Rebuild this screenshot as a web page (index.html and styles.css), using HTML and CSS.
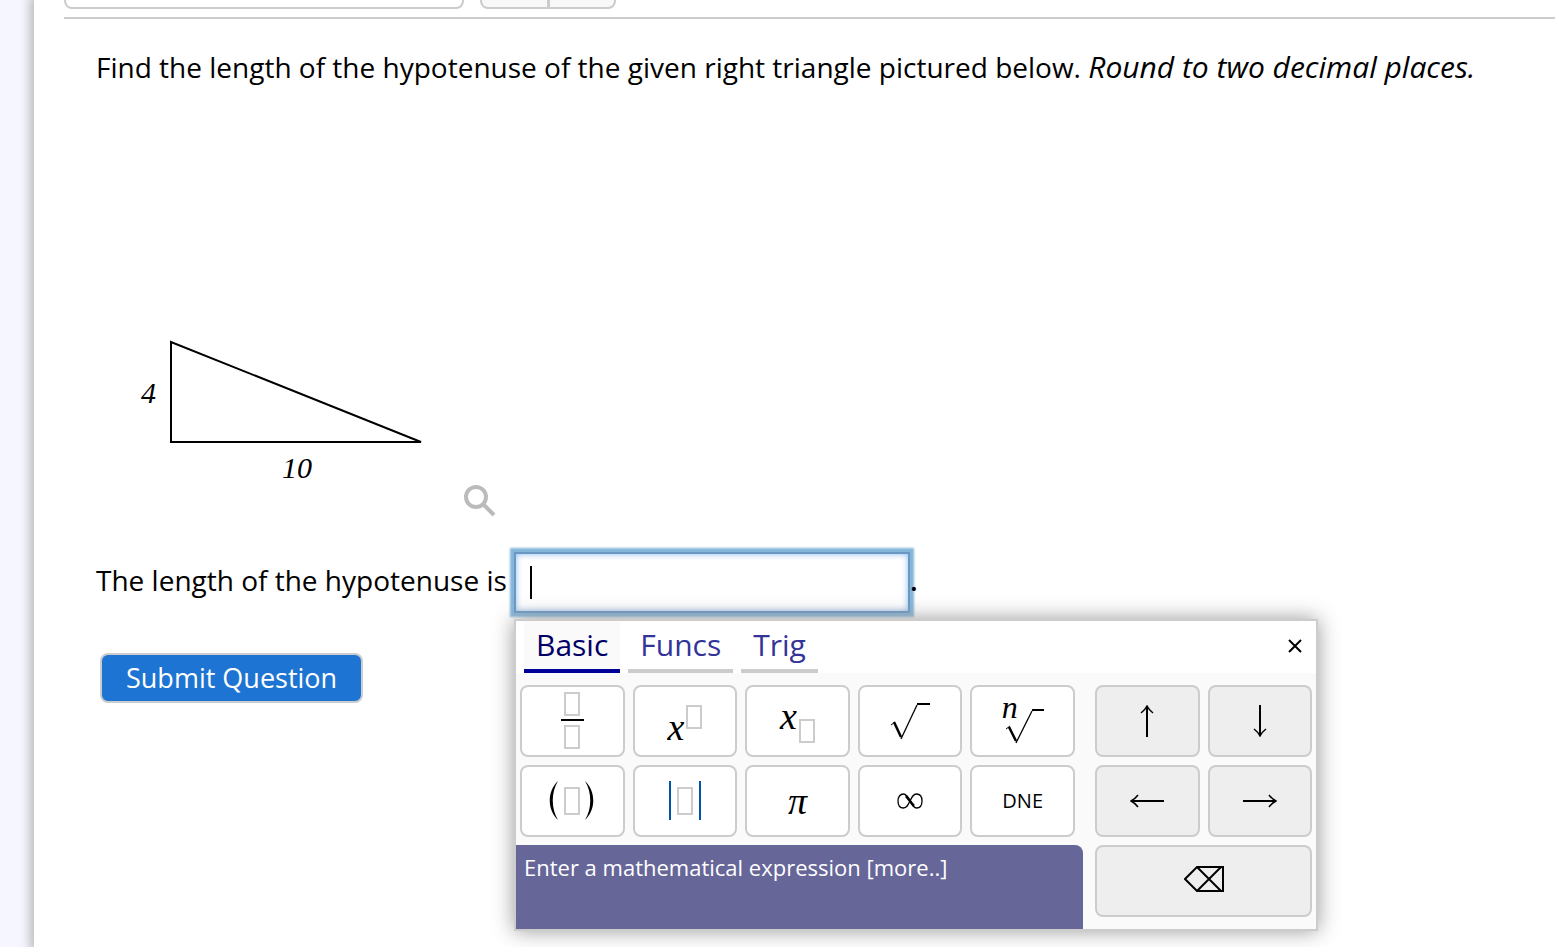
FILE: index.html
```
<!DOCTYPE html>
<html lang="en">
<head>
    <meta charset="utf-8">
    <meta name="viewport" content="width=device-width, initial-scale=1.0">
    <title>Question</title>
    <link rel="stylesheet" href="styles.css">
</head>
<body>
    <main class="page">
        <header class="topbar">
            <button class="question-select" type="button" aria-label="Select question"></button>
            <div class="pager">
                <button type="button" aria-label="Previous"></button>
                <button type="button" aria-label="Next"></button>
            </div>
        </header>

        <section class="question">
            <p class="prompt">Find the length of the hypotenuse of the given right triangle pictured below. <em>Round to two decimal places.</em></p>

            <div class="figure">
                <svg width="368" height="400" viewBox="0 0 368 400" role="img" aria-label="Right triangle">
                    <path d="M75 225V325H325Z" fill="none" stroke="#000" stroke-width="2"/>
                    <text x="45" y="286">4</text>
                    <text x="186" y="361">10</text>
                </svg>
                <button class="enlarge" type="button" aria-label="Enlarge graph">
                    <svg width="32" height="32" viewBox="0 0 32 32" fill="none" stroke="#bbb" stroke-width="4">
                        <circle cx="12" cy="12" r="10"/>
                        <path d="M19 19L30 30"/>
                    </svg>
                </button>
            </div>

            <div class="answer">
                <label for="qn0">The length of the hypotenuse is</label>
                <div class="answer-box">
                    <input type="text" id="qn0" autocomplete="off">
                    <span class="cursor"></span>

                    <div class="keypad">
                        <div class="tabs">
                            <button class="tab active" type="button">Basic</button>
                            <button class="tab" type="button">Funcs</button>
                            <button class="tab" type="button">Trig</button>
                            <button class="close" type="button" aria-label="Close">
                                <svg width="14" height="14" viewBox="0 0 14 14" fill="none" stroke="#000" stroke-width="2"><path d="M1 1L13 13M13 1L1 13"/></svg>
                            </button>
                        </div>
                        <div class="panel">
                            <div class="left">
                                <div class="keys">
                                    <button type="button" aria-label="Fraction"><span class="frac"><i class="slot"></i><i class="slot"></i></span></button>
                                    <button type="button" aria-label="Exponent"><span class="script sup"><var>x</var><i class="slot"></i></span></button>
                                    <button type="button" aria-label="Subscript"><span class="script sub"><var>x</var><i class="slot"></i></span></button>
                                    <button type="button" aria-label="Square root">
                                        <svg width="42" height="38" viewBox="0 0 42 38" fill="none" stroke="#000"><path d="M2 23L6 20" stroke-width="1"/><path d="M5 20L12 35" stroke-width="2.5"/><path d="M12 37L28 3" stroke-width="1.3"/><path d="M28 2H41" stroke-width="2"/></svg>
                                    </button>
                                    <button type="button" aria-label="Nth root">
                                        <span class="root"><var>n</var><svg width="42" height="38" viewBox="0 0 42 38" fill="none" stroke="#000"><path d="M4 23L8 20" stroke-width="1"/><path d="M7 21L14 35" stroke-width="2.5"/><path d="M14 37L30 5" stroke-width="1.3"/><path d="M30 4H42" stroke-width="2"/></svg></span>
                                    </button>
                                    <button type="button" aria-label="Parentheses">
                                        <svg width="48" height="40" viewBox="0 0 48 40"><path d="M10 0C-1 10-1 29 10 39C3 28 3 11 10 0ZM37 0C48 10 48 29 37 39C44 28 44 11 37 0Z"/><rect x="17" y="7" width="14" height="26" fill="none" stroke="#ccc" stroke-width="2"/></svg>
                                    </button>
                                    <button type="button" aria-label="Absolute value">
                                        <svg width="48" height="40" viewBox="0 0 48 40" fill="none" stroke-width="2"><path d="M9 0V39M39 0V39" stroke="#05a"/><rect x="17" y="7" width="14" height="26" stroke="#ccc"/></svg>
                                    </button>
                                    <button type="button"><var>π</var></button>
                                    <button type="button" aria-label="Infinity">
                                        <svg width="26" height="18" viewBox="0 0 26 18" fill="none" stroke="#000"><path d="M13 9C10 4 9 2 6.500 2C3 2 1 5 1 9S3 16 6.500 16C10 16 11 13 13 9S16 2 19.500 2C23 2 25 5 25 9S23 16 19.500 16C17 16 16 14 13 9Z" stroke-width="1.300"/><path d="M9 4C12 7 14 11 17 14" stroke-width="2.500"/></svg>
                                    </button>
                                    <button type="button">DNE</button>
                                </div>
                                <div class="tip">Enter a mathematical expression <a href="#">[more..]</a></div>
                            </div>
                            <div class="nav">
                                <button type="button" aria-label="Up">
                                    <svg width="14" height="32" viewBox="0 0 14 32" fill="none" stroke="#000"><path d="M7 1V32" stroke-width="2"/><path d="M1 8Q5 5 7 1Q9 5 13 8" stroke-width="1.500"/></svg>
                                </button>
                                <button type="button" aria-label="Down">
                                    <svg width="14" height="32" viewBox="0 0 14 32" fill="none" stroke="#000"><path d="M7 0V31" stroke-width="2"/><path d="M1 24Q5 27 7 31Q9 27 13 24" stroke-width="1.500"/></svg>
                                </button>
                                <button type="button" aria-label="Left">
                                    <svg width="34" height="14" viewBox="0 0 34 14" fill="none" stroke="#000"><path d="M1 7H34" stroke-width="2"/><path d="M8 1Q5 5 1 7Q5 9 8 13" stroke-width="1.500"/></svg>
                                </button>
                                <button type="button" aria-label="Right">
                                    <svg width="34" height="14" viewBox="0 0 34 14" fill="none" stroke="#000"><path d="M0 7H33" stroke-width="2"/><path d="M26 1Q29 5 33 7Q29 9 26 13" stroke-width="1.500"/></svg>
                                </button>
                                <button class="wide" type="button" aria-label="Backspace">
                                    <svg width="40" height="26" viewBox="0 0 40 26" fill="none" stroke="#000" stroke-width="2"><path d="M1 13L13 1H39V25H13ZM13 1L37 25M37 1L13 25"/></svg>
                                </button>
                            </div>
                        </div>
                    </div>
                </div>
                <span class="period">.</span>
            </div>

            <button class="submit" type="button">Submit Question</button>
        </section>
    </main>
</body>
</html>
```
FILE: styles.css
```
* { box-sizing: border-box; }

body {
    margin: 0;
    background: #f5f6ff;
    color: #000;
    font-family: "Trebuchet MS", "Open Sans", sans-serif;
    font-size: 28px;
    line-height: 40px;
    overflow: hidden;
}

button {
    font: inherit;
    color: inherit;
    padding: 0;
    margin: 0;
    border: 0;
    background: none;
}

svg { display: block; }

.page {
    min-height: 100vh;
    margin-left: 34px;
    padding-left: 30px;
    background: #fff;
    box-shadow: 0 0 10px 4px #bbb;
}

/* top bar */
.topbar {
    display: flex;
    gap: 16px;
    height: 19px;
    border-bottom: 2px solid #ccc;
}
.question-select {
    width: 400px;
    height: 9px;
    border: 2px solid #ccc;
    border-top: 0;
    border-radius: 0 0 8px 8px;
}
.pager {
    display: flex;
    width: 136px;
    height: 9px;
    border: 2px solid #ccc;
    border-top: 0;
    border-radius: 0 0 8px 8px;
    background: #f8f8f8;
}
.pager button { flex: 1; }
.pager button + button { border-left: 3px solid #ccc; }

.question { padding: 28px 32px; }
.prompt { margin: 0; }
.prompt em { font-size: 30px; }

/* graph */
.figure {
    display: flex;
    align-items: flex-end;
    margin-top: 30px;
}
.figure text {
    font: italic 30px "Liberation Serif", serif;
}

/* answer */
.answer {
    display: flex;
    align-items: flex-start;
    margin-top: 35px;
}
.answer label {
    width: 418px;
    margin-top: 8px;
}
.answer-box { position: relative; }
.answer input {
    display: block;
    width: 396px;
    height: 61px;
    padding: 0 16px;
    border: 2px solid #6a98c4;
    border-radius: 0;
    outline: none;
    font: inherit;
    box-shadow: 0 0 2px 4px #84b6da, inset 0 0 6px #8ab8ee;
}
.cursor {
    position: absolute;
    left: 16px;
    top: 14px;
    width: 2px;
    height: 33px;
    background: #000;
}
.period {
    position: relative;
    margin-top: 8px;
    font-weight: 600;
}

/* keypad */
.keypad {
    position: absolute;
    left: 0;
    top: 67px;
    width: 804px;
    border: 2px solid #ccc;
    background: #fafafa;
    box-shadow: 0 0 20px #999;
}
.tabs {
    display: flex;
    gap: 8px;
    height: 52px;
    padding: 0 8px;
    background: #fff;
}
.tab {
    padding: 0 12px;
    border-bottom: 4px solid #ccc;
    color: #339;
    font-size: 30px;
}
.tab.active {
    border-color: #009;
    background: #fafafa;
    color: #006;
}
.close {
    margin-left: auto;
    padding: 0 6px 2px;
}

.panel {
    display: flex;
    padding-top: 12px;
}
.left { width: 567px; }
.keys, .nav {
    display: grid;
    gap: 8px;
    grid-auto-rows: 72px;
}
.keys {
    grid-template-columns: repeat(5, 1fr);
    padding: 0 8px 8px 4px;
}
.nav {
    flex: 1;
    grid-template-columns: repeat(2, 1fr);
    padding: 0 4px 12px 12px;
}
.panel button {
    display: flex;
    align-items: center;
    justify-content: center;
    border: 2px solid #ccc;
    border-radius: 8px;
    background: #fff;
    font-size: 20px;
}
.nav button { background: #eee; }
.nav .wide {
    grid-column: span 2;
    padding-bottom: 4px;
}

.tip {
    height: 84px;
    padding: 2px 8px;
    border-radius: 0 8px 0 0;
    background: #669;
    color: #fff;
    font-size: 22px;
}
.tip a {
    color: inherit;
    text-decoration: none;
}

/* key faces */
.slot {
    width: 16px;
    height: 24px;
    border: 2px solid #ccc;
}
.frac {
    display: flex;
    flex-direction: column;
    align-items: center;
    gap: 9px;
    width: 23px;
    padding-bottom: 2px;
    background: linear-gradient(#000, #000) center 27px / 100% 2px no-repeat;
}
.panel var {
    font-family: "Liberation Serif", serif;
    font-size: 38px;
    line-height: 32px;
}
.script {
    display: flex;
    align-items: flex-start;
    gap: 2px;
    height: 40px;
}
.script.sup var { padding-top: 10px; }
.script.sup .slot { margin-top: 4px; }
.script.sub var { margin-top: -1px; }
.script.sub .slot { margin-top: 18px; }
.root {
    position: relative;
    padding-top: 8px;
}
.panel .root var {
    position: absolute;
    left: 0;
    top: -7px;
    font-size: 32px;
}

.submit {
    display: block;
    margin: 40px 4px 0;
    padding: 3px 24px;
    border: 2px solid #ccc;
    border-radius: 8px;
    background: #1e74d2;
    color: #fff;
    font-size: 27px;
}
```
